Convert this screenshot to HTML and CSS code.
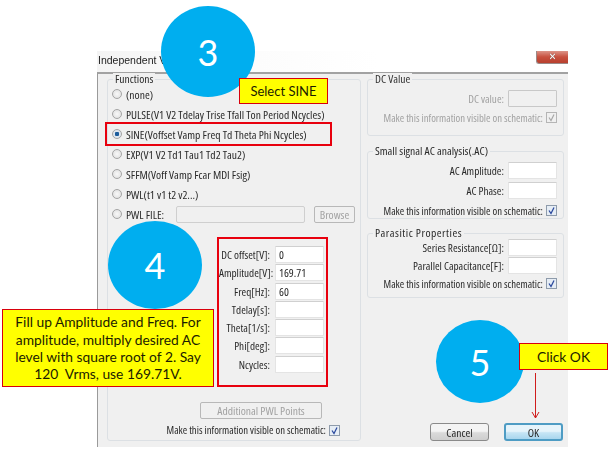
FILE: index.html
```html
<!DOCTYPE html>
<html lang="en">
<head>
<meta charset="utf-8">
<title>Independent Voltage Source</title>
<link rel="stylesheet" href="styles.css">
</head>
<body>
<div class="stage">
  <div class="dialog">
    <div class="titlebar">
      <span class="title">Independent V</span>
      <span class="close">&#10005;</span>
    </div>
    <div class="panel">
      <div class="group functions">
        <span class="legend">Functions</span>
        <div class="radio"><i class="dot"></i>(none)</div>
        <div class="radio"><i class="dot"></i>PULSE(V1 V2 Tdelay Trise Tfall Ton Period Ncycles)</div>
        <div class="radio"><i class="dot on"></i>SINE(Voffset Vamp Freq Td Theta Phi Ncycles)</div>
        <div class="radio"><i class="dot"></i>EXP(V1 V2 Td1 Tau1 Td2 Tau2)</div>
        <div class="radio"><i class="dot"></i>SFFM(Voff Vamp Fcar MDI Fsig)</div>
        <div class="radio"><i class="dot"></i>PWL(t1 v1 t2 v2...)</div>
        <div class="radio"><i class="dot"></i><span class="file-label">PWL FILE:</span><span class="filebox"></span><span class="btn browse">Browse</span></div>
        <div class="params">
          <label>DC offset[V]:</label><span class="field">0</span>
          <label>Amplitude[V]:</label><span class="field">169.71</span>
          <label>Freq[Hz]:</label><span class="field">60</span>
          <label>Tdelay[s]:</label><span class="field"></span>
          <label>Theta[1/s]:</label><span class="field"></span>
          <label>Phi[deg]:</label><span class="field"></span>
          <label>Ncycles:</label><span class="field"></span>
        </div>
        <span class="btn pwl">Additional PWL Points</span>
        <div class="visible fn-visible">Make this information visible on schematic:<svg class="check" viewBox="0 0 11 11"><rect x=".5" y=".5" width="10" height="10" fill="#e6edf5" stroke="#8e9bab"/><path d="M3 5.5 5 8.5 8 2.5" fill="none" stroke="#2c4a9e" stroke-width="1.3"/></svg></div>
      </div>
      <div class="side">
        <div class="group dc disabled">
          <span class="legend">DC Value</span>
          <div class="row"><label>DC value:</label><span class="field dim"></span></div>
          <div class="visible">Make this information visible on schematic:<svg class="check" viewBox="0 0 11 11"><rect x=".5" y=".5" width="10" height="10" fill="#f0f0f0" stroke="#b5b5b5"/><path d="M3 5.5 5 8.5 8 2.5" fill="none" stroke="#a8a8a8" stroke-width="1.2"/></svg></div>
        </div>
        <div class="group ac">
          <span class="legend">Small signal AC analysis(.AC)</span>
          <div class="row"><label>AC Amplitude:</label><span class="field"></span></div>
          <div class="row"><label>AC Phase:</label><span class="field"></span></div>
          <div class="visible">Make this information visible on schematic:<svg class="check" viewBox="0 0 11 11"><rect x=".5" y=".5" width="10" height="10" fill="#e6edf5" stroke="#8e9bab"/><path d="M3 5.5 5 8.5 8 2.5" fill="none" stroke="#2c4a9e" stroke-width="1.3"/></svg></div>
        </div>
        <div class="group parasitic">
          <span class="legend wide">Parasitic Properties</span>
          <div class="row"><label>Series Resistance[&#937;]:</label><span class="field"></span></div>
          <div class="row"><label>Parallel Capacitance[F]:</label><span class="field"></span></div>
          <div class="visible">Make this information visible on schematic:<svg class="check" viewBox="0 0 11 11"><rect x=".5" y=".5" width="10" height="10" fill="#e6edf5" stroke="#8e9bab"/><path d="M3 5.5 5 8.5 8 2.5" fill="none" stroke="#2c4a9e" stroke-width="1.3"/></svg></div>
        </div>
        <div class="actions">
          <span class="btn action">Cancel</span>
          <span class="btn action default">OK</span>
        </div>
      </div>
    </div>
  </div>

  <div class="circle c3">3</div>
  <div class="circle c4">4</div>
  <div class="circle c5">5</div>
  <div class="callout select">Select SINE</div>
  <div class="callout fill">Fill up Amplitude and Freq. For amplitude, multiply desired AC level with square root of 2. Say 120&nbsp; Vrms, use 169.71V.</div>
  <div class="callout click">Click OK</div>
  <div class="highlight"></div>
  <svg class="arrow" viewBox="0 0 9 46"><path d="M4.5 0V45M1 39 4.5 45 8 39" fill="none" stroke="#d01c1c" stroke-width="1"/></svg>
</div>
</body>
</html>
```
FILE: styles.css
```css
html, body { margin: 0; padding: 0; background: #fff; }
.stage { position: relative; width: 613px; height: 460px; overflow: hidden; font-family: "Liberation Sans", Arial, sans-serif; }

.dialog { margin: 51px 0 0 97px; width: 471px; height: 396px; display: flex; flex-direction: column; font-family: "Open Sans", "Liberation Sans", sans-serif; font-stretch: 75%; font-size: 11.6px; color: #2a2a2a; filter: blur(.4px); }
.titlebar { height: 21px; flex: none; display: flex; align-items: flex-start; justify-content: space-between; background: linear-gradient(90deg, #f4f4f4, #fbfbfb 25%, #fff 60%); }
.title { margin: 3px 0 0 1px; font-family: "Liberation Sans", sans-serif; font-size: 10.5px; line-height: 13px; color: #222; }
.close { width: 32px; height: 13px; line-height: 12px; text-align: center; font-family: "DejaVu Sans", sans-serif; font-size: 10px; font-weight: bold; color: #fff; text-shadow: 0 0 1px #444; background: linear-gradient(#dd9488, #c8503f 50%, #b8402e); border: 1px solid #9a8a88; border-top: 0; border-right: 0; box-sizing: border-box; border-radius: 0 0 0 3px; }
.panel { flex: 1; display: flex; gap: 6px; background: #f0f0f0; border-top: 2px solid #a2a2a2; border-left: 1px solid #9a9a9a; padding: 5px 4px 6px 9px; min-height: 0; }

.group { position: relative; border: 1px solid #dce0e4; border-radius: 3px; box-sizing: border-box; }
.legend { position: absolute; left: 5px; top: -7px; padding: 0 2px; background: #f0f0f0; line-height: 12px; white-space: nowrap; }
.legend.wide { letter-spacing: .5px; }

.functions { width: 254px; height: 362px; padding-top: 4px; }
.radio { height: 20px; display: flex; align-items: center; padding-left: 4px; white-space: nowrap; }
.dot { width: 10px; height: 10px; flex: none; box-sizing: border-box; margin-right: 4px; border-radius: 50%; border: 1px solid #a4a4a4; background: radial-gradient(#f8f8f8, #dcdcdc); }
.dot.on { background: radial-gradient(#1c5c9c 35%, #dfe6ee 45%); }
.file-label { width: 50px; flex: none; }
.filebox { width: 129px; height: 17px; border: 1px solid #cfcfcf; border-radius: 2px; box-sizing: border-box; background: #f0f0f0; }
.btn { display: flex; align-items: center; justify-content: center; box-sizing: border-box; border: 1px solid #b8b8b8; border-radius: 2px; }
.browse { width: 41px; height: 17px; margin-left: 9px; color: #a2a2a2; }

.params { display: grid; grid-template-columns: minmax(0, 1fr) 49px; grid-auto-rows: 17px; row-gap: 1.3px; align-items: center; column-gap: 5px; width: 111px; height: 150px; box-sizing: border-box; margin: 13px 0 0 109px; padding: 7px 2px 0 0; border: 2px solid #e8000e; }
.params label { text-align: right; white-space: nowrap; font-size: 11.2px; }
.field { display: block; height: 17px; line-height: 15px; padding-left: 3px; box-sizing: border-box; background: #fff; border: 1px solid #e4e4e4; border-top-color: #d0d0d0; border-radius: 1px; }
.pwl { width: 122px; height: 17px; margin: 15px 0 0 92px; color: #a2a2a2; }
.visible { display: flex; align-items: center; justify-content: flex-end; gap: 3px; white-space: nowrap; height: 17px; font-size: 10.7px; }
.check { width: 11px; height: 11px; flex: none; }
.fn-visible { margin-top: 3px; padding-right: 20px; height: 16px; }

.side { width: 197px; display: flex; flex-direction: column; }
.group.dc { height: 57px; padding: 10px 6px 0 0; color: #a2a2a2; }
.group.dc .legend { color: #333; }
.group.ac { height: 68px; padding: 10px 6px 0 0; margin-top: 15px; }
.group.parasitic { height: 65px; padding: 5px 6px 0 0; margin-top: 14px; }
.row { display: flex; align-items: center; justify-content: flex-end; gap: 4px; height: 17px; margin-bottom: 2px; white-space: nowrap; font-size: 11.2px; }
.ac .row { margin-bottom: 3px; }
.parasitic .row { margin-bottom: 1px; }
.row .field { width: 49px; }
.field.dim { background: #f0f0f0; border-color: #c8c8c8; }
.actions { margin-top: auto; display: flex; justify-content: flex-end; gap: 15px; padding-right: 1px; }
.action { width: 59px; height: 18px; border-color: #8a8a8a; background: linear-gradient(#f4f4f4 45%, #dadada 55%, #cfcfcf); border-radius: 3px; }
.default { border-color: #4e9cc4; border-width: 2px; background: linear-gradient(#e6f4fb 45%, #c6e5f5 55%, #a9d6ee); }

.circle { position: absolute; display: flex; align-items: center; justify-content: center; background: #00aeef; color: #fff; border-radius: 50%; font-family: "Lato", "Open Sans", sans-serif; font-size: 36px; }
.c3 { left: 161px; top: 6px; width: 94px; height: 91px; }
.c4 { left: 108px; top: 221px; width: 94px; height: 88px; }
.c5 { left: 436px; top: 320px; width: 88px; height: 83px; }
.callout { position: absolute; box-sizing: border-box; display: flex; align-items: center; justify-content: center; text-align: center; background: #ffff00; border: 1px solid #d8000c; color: #1c1c00; font-family: "Lato", "Open Sans", sans-serif; }
.select { left: 239px; top: 78px; width: 89px; height: 26px; font-size: 13px; }
.click { left: 519px; top: 343px; width: 89px; height: 27px; font-size: 13.8px; }
.fill { left: 2px; top: 309px; width: 212px; height: 78px; font-size: 13.8px; line-height: 17.3px; padding: 0 8px; }
.highlight { position: absolute; left: 105px; top: 122px; width: 227px; height: 24px; box-sizing: border-box; border: 2px solid #e8000e; }
.arrow { position: absolute; left: 531px; top: 373px; width: 9px; height: 46px; }
```
